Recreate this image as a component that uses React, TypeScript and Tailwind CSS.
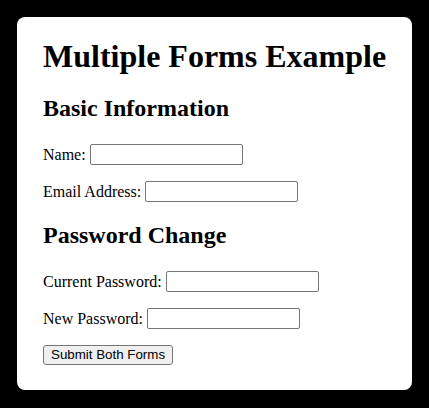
import React from "react";

const serif = { fontFamily: '"Liberation Serif", "Times New Roman", serif' };

function Row({ label, type = "text" }: { label: string; type?: string }) {
  return (
    <div className="flex h-[21px] items-center gap-[4px] text-[16px] leading-[21px] text-black">
      <label>{label}</label>
      <input
        type={type}
        className="h-[21px] w-[153px] rounded-[2px] border border-[#767676] bg-white px-[2px] text-[13.33px] outline-none"
        style={{ fontFamily: '"Liberation Sans", Arial, sans-serif' }}
      />
    </div>
  );
}

export default function App() {
  return (
    <div className="flex min-h-[408px] w-full bg-black p-[17px]" style={serif}>
      <div className="flex w-full flex-col self-start rounded-lg bg-white px-[26px] pt-[21px] pb-[25px]">
        <h1 className="whitespace-nowrap text-[32px] font-bold leading-[36px] text-black">
          Multiple Forms Example
        </h1>
        <form className="mt-[21px] flex flex-col" onSubmit={(e) => e.preventDefault()}>
          <h2 className="text-[24px] font-bold leading-[27px] text-black">Basic Information</h2>
          <div className="mt-[22px]">
            <Row label="Name:" />
          </div>
          <div className="mt-[16px]">
            <Row label="Email Address:" type="email" />
          </div>
        </form>
        <form className="mt-[20px] flex flex-col" onSubmit={(e) => e.preventDefault()}>
          <h2 className="text-[24px] font-bold leading-[27px] text-black">Password Change</h2>
          <div className="mt-[22px]">
            <Row label="Current Password:" type="password" />
          </div>
          <div className="mt-[16px]">
            <Row label="New Password:" type="password" />
          </div>
        </form>
        <div className="mt-[16px] flex">
          <button
            type="button"
            className="h-[20px] rounded-[3px] border border-[#767676] bg-[#efefef] px-[7px] text-[13.33px] leading-[18px] text-black"
            style={{ fontFamily: '"Liberation Sans", Arial, sans-serif' }}
          >
            Submit Both Forms
          </button>
        </div>
      </div>
    </div>
  );
}
